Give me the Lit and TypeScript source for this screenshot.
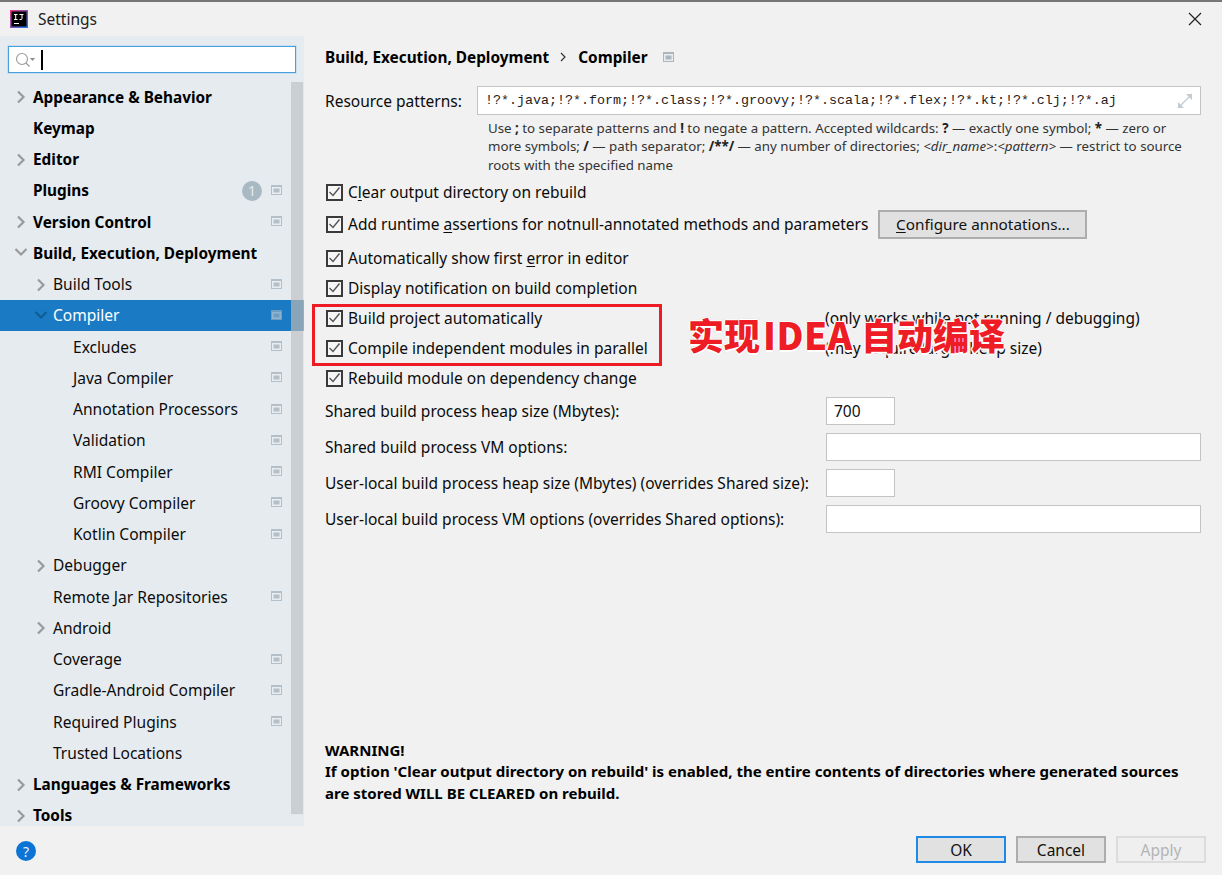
import { LitElement, html, css, svg } from "lit";
import { customElement } from "lit/decorators.js";

type Row = { t: string; lvl: number; bold?: boolean; arrow?: "r" | "d"; gear?: boolean; sel?: boolean; badge?: string };

const rows: Row[] = [
  { t: "Appearance & Behavior", lvl: 0, bold: true, arrow: "r" },
  { t: "Keymap", lvl: 0, bold: true },
  { t: "Editor", lvl: 0, bold: true, arrow: "r" },
  { t: "Plugins", lvl: 0, bold: true, gear: true, badge: "1" },
  { t: "Version Control", lvl: 0, bold: true, arrow: "r", gear: true },
  { t: "Build, Execution, Deployment", lvl: 0, bold: true, arrow: "d" },
  { t: "Build Tools", lvl: 1, arrow: "r", gear: true },
  { t: "Compiler", lvl: 1, arrow: "d", gear: true, sel: true },
  { t: "Excludes", lvl: 2, gear: true },
  { t: "Java Compiler", lvl: 2, gear: true },
  { t: "Annotation Processors", lvl: 2, gear: true },
  { t: "Validation", lvl: 2, gear: true },
  { t: "RMI Compiler", lvl: 2, gear: true },
  { t: "Groovy Compiler", lvl: 2, gear: true },
  { t: "Kotlin Compiler", lvl: 2, gear: true },
  { t: "Debugger", lvl: 1, arrow: "r" },
  { t: "Remote Jar Repositories", lvl: 1, gear: true },
  { t: "Android", lvl: 1, arrow: "r" },
  { t: "Coverage", lvl: 1, gear: true },
  { t: "Gradle-Android Compiler", lvl: 1, gear: true },
  { t: "Required Plugins", lvl: 1, gear: true },
  { t: "Trusted Locations", lvl: 1 },
  { t: "Languages & Frameworks", lvl: 0, bold: true, arrow: "r" },
  { t: "Tools", lvl: 0, bold: true, arrow: "r" },
];

const scope = svg`<svg class="scope" width="11" height="10" viewBox="0 0 11 10"><rect width="11" height="10" fill="currentColor"/><rect x="1" y="2" width="9" height="7" fill="#e9edf0"/><rect x="2.500" y="3.500" width="6" height="4" fill="currentColor"/></svg>`;

@customElement("app-root")
export class AppRoot extends LitElement {
  static styles = css`
    :host { display: block; width: 1222px; height: 875px; overflow: hidden; background: #f1f1f1; color: #0b0b0b;
      font-family: "Noto Sans", "Open Sans", sans-serif; font-size: 15.5px; position: relative; }
    * { box-sizing: border-box; }
    .app { height: 875px; display: flex; flex-direction: column; border-top: 2px solid #777; }
    .title { height: 34px; flex: none; display: flex; align-items: center; padding: 0 0 0 10px; gap: 10px; color: #222; font-size: 15.5px; }
    .close { margin-left: auto; margin-right: 20px; }
    .body { flex: 1; min-height: 0; display: flex; }
    .side { width: 304px; flex: none; background: #e6ebf0; display: flex; flex-direction: column; position: relative; overflow: hidden; }
    .search { margin: 10px 8px 8px 8px; height: 27px; background: #fff; border: 1px solid #4a9fdf; box-shadow: 0 0 0 .5px #a9d3f2; display: flex; align-items: center; padding-left: 6px; gap: 3px; flex: none; }
    .caret { width: 2px; height: 20px; background: #000; margin-left: 2px; }
    .tree { flex: 1; min-height: 0; overflow: hidden; }
    .row { height: 31.25px; display: flex; align-items: center; position: relative; white-space: nowrap; font-size: 15.55px; }
    .row.sel { background: #1a7bc4; color: #fff; }
    .bold { font-weight: 700; color: #000; font-size: 15.35px; }
    .lvl0 { padding-left: 33px; } .lvl1 { padding-left: 53px; } .lvl2 { padding-left: 73px; }
    .arrow { position: absolute; top: 9px; }
    .badge { position: absolute; left: 242px; top: 6px; width: 20px; height: 20px; border-radius: 50%; background: #a9b9c4; color: #e6ebf0; font-size: 14px; display: flex; align-items: center; justify-content: center; }
    .scope { color: #b3c0ca; flex: none; display: block; }
    .row .scope { position: absolute; left: 271px; top: 10px; }
    .row.sel .scope { color: #6f9dc0; }
    .row.sel .scope rect:nth-child(2) { fill: #8fb4d0; }
    .scroll { position: absolute; left: 291px; top: 46px; width: 13px; height: 733px; background: #cbcfd4; border-right: 1px solid #e3e6ea; border-bottom: 1px solid #e3e6ea; }
    .row.sel::after { content: ""; position: absolute; left: 291px; top: 0; bottom: 0; width: 13px; background: rgba(60,110,150,.45); z-index: 1; }
    .main { flex: 1; min-width: 0; padding: 0 21px 0 21px; display: flex; flex-direction: column; }
    .crumb { height: 42px; display: flex; align-items: center; font-weight: 700; color: #000; flex: none; font-size: 15.35px; }
    .crumb .sep { margin: 0 11px; display: block; }
    .crumb .scope { margin-left: 15px; color: #aab7c1; }
    .res { display: flex; align-items: center; height: 29px; margin-top: 8px; flex: none; }
    .res label { width: 152px; flex: none; }
    .input { background: #fff; border: 1px solid #c4c4c4; height: 100%; }
    .pat { flex: 1; display: flex; align-items: center; padding-left: 7px; font-family: "Liberation Mono", monospace; font-size: 13.33px; color: #222; height: 29px; border-width: 1.5px; }
    .pat svg { margin-left: auto; margin-right: 7px; }
    .help { margin: 3.5px 0 0 163px; font-size: 13.3px; line-height: 18.5px; color: #333; flex: none; white-space: nowrap; }
    .help b { color: #222; }
    .check { display: flex; align-items: center; gap: 5px; height: 30px; flex: none; white-space: nowrap; position: relative; }
    .c1 { margin-top: 3px; }
    .c2 { height: 34px; }
    .c3 { margin-top: 2px; }
    .box { width: 17px; height: 17px; border: 2px solid #3a3a3a; background: #f6f6f6; flex: none; display: flex; align-items: center; justify-content: center; margin-left: 1px; }
    .note { position: absolute; left: 500px; }
    .btn { display: inline-flex; align-items: center; justify-content: center; background: #e1e1e1; border: 2px solid #adadad; color: #111; }
    .cfg { margin-left: 5px; width: 209px; height: 29px; font-size: 15.3px; }
    .field { display: flex; align-items: center; height: 36px; flex: none; }
    .field label { width: 501px; flex: none; white-space: nowrap; }
    .field .input { height: 28px; border-width: 1.5px; }
    .sm { width: 69px; } .lg { flex: 1; }
    .val { padding: 2px 7px; color: #111; }
    .warn { margin-top: auto; margin-bottom: 22px; font-weight: 700; line-height: 21.5px; color: #000; font-size: 15.04px; white-space: nowrap; }
    .foot { height: 49px; flex: none; display: flex; align-items: flex-start; padding: 10px 16px 0 16px; gap: 10px; background: #f1f1f1; }
    .q { width: 20px; height: 20px; margin-top: 5px; border-radius: 50%; background: #0b74d4; color: #e8f2fb; font-size: 14px; display: flex; align-items: center; justify-content: center; margin-right: auto; }
    .foot .btn { width: 90px; height: 27px; }
    .ok { border-color: #1e8ae6; }
    .btn.dis { border-color: #dcdcdc; background: #efefef; color: #b4b4b4; }
    u { text-underline-offset: 2px; text-decoration-thickness: 1px; }
    .redbox { position: absolute; left: 312px; top: 304px; width: 350px; height: 62px; border: 3px solid #ed1c24; pointer-events: none; }
    .anno { position: absolute; left: 688px; top: 311px; font-family: "Noto Sans CJK SC", sans-serif; font-weight: 900; font-size: 36px; line-height: 46px; color: #ee1c25; white-space: nowrap; display: flex; align-items: baseline;
      text-shadow: 1.5px 0 0 #fff, -1.5px 0 0 #fff, 0 1.5px 0 #fff, 0 -1.5px 0 #fff, 1px 1px 1px #ddd, -1px -1px 1px #ddd, 1px -1px 1px #ddd, -1px 1px 1px #ddd; }
    .anno .lat { font-size: 37px; margin-left: 3px; width: 98px; letter-spacing: .5px; }
  `;

  private arrow(r: Row) {
    const x = r.lvl === 0 ? 15 : 35;
    const col = r.sel ? "#0f5c96" : "#9a9a9a";
    if (r.arrow === "r")
      return html`<svg class="arrow" style="left:${x}px" width="12" height="14" viewBox="0 0 12 14"><path d="M3 1.500 L8.500 7 L3 12.500" fill="none" stroke="${col}" stroke-width="2.200"/></svg>`;
    if (r.arrow === "d")
      return html`<svg class="arrow" style="left:${x - 1}px" width="14" height="12" viewBox="0 0 14 12"><path d="M1.500 3 L7 8.500 L12.500 3" fill="none" stroke="${col}" stroke-width="2.200"/></svg>`;
    return null;
  }

  private box() {
    return html`<span class="box"><svg width="13" height="12" viewBox="0 0 13 12"><path d="M1.500 6 L5 9.500 L11.500 1.500" fill="none" stroke="#555" stroke-width="1.400"/></svg></span>`;
  }

  render() {
    return html`<div class="app">
      <div class="title">
        <svg width="18" height="18" viewBox="0 0 18 18">
          <defs><linearGradient id="g" x1="0" y1="0" x2="1" y2="1"><stop offset="0" stop-color="#f0347c"/><stop offset="1" stop-color="#1678f0"/></linearGradient></defs>
          <rect width="18" height="18" fill="url(#g)"/><rect x="1.500" y="1.500" width="15" height="15" fill="#000"/>
          <rect x="4" y="13" width="5" height="1" fill="#fff"/>
          <path d="M4 4.500h3.500M5.700 4.500v5M4 9.500h3.500M9.500 4.500h4M12 4.500v4q0 1-1 1h-1.500" fill="none" stroke="#fff" stroke-width="1"/>
        </svg>
        <span>Settings</span>
        <svg class="close" width="14" height="14" viewBox="0 0 14 14"><path d="M1 1 L13 13 M13 1 L1 13" stroke="#222" stroke-width="1.200"/></svg>
      </div>
      <div class="body">
        <aside class="side">
          <div class="search">
            <svg width="21" height="16" viewBox="0 0 21 16"><circle cx="7" cy="7" r="5.500" fill="none" stroke="#9a9a9a" stroke-width="1.100"/><path d="M11 11 L14.500 14.500" stroke="#9a9a9a" stroke-width="1.300"/><path d="M15 6 h5 l-2.500 3 z" fill="#8a8a8a"/></svg>
            <span class="caret"></span>
          </div>
          <div class="tree">
            ${rows.map((r) => html`<div class="row lvl${r.lvl} ${r.sel ? "sel" : ""}">
              ${this.arrow(r)}
              <span class="${r.bold ? "bold" : ""}">${r.t}</span>
              ${r.badge ? html`<span class="badge">${r.badge}</span>` : null}
              ${r.gear ? scope : null}
            </div>`)}
          </div>
          <div class="scroll"></div>
        </aside>
        <main class="main">
          <div class="crumb">
            <span>Build, Execution, Deployment</span>
            <svg class="sep" width="7" height="10" viewBox="0 0 7 10"><path d="M1 1 L5 5 L1 9" fill="none" stroke="#333" stroke-width="1.200"/></svg>
            <span>Compiler</span>
            ${scope}
          </div>
          <div class="res">
            <label>Resource patterns:</label>
            <div class="input pat">!?*.java;!?*.form;!?*.class;!?*.groovy;!?*.scala;!?*.flex;!?*.kt;!?*.clj;!?*.aj
              <svg width="16" height="16" viewBox="0 0 16 16"><path d="M1 15 L15 1" stroke="#c4ccd2" stroke-width="1.200"/><path d="M9 1h6v6z M1 9v6h6z" fill="#c4ccd2"/></svg>
            </div>
          </div>
          <div class="help">
            Use <b>;</b> to separate patterns and <b>!</b> to negate a pattern. Accepted wildcards: <b>?</b> — exactly one symbol; <b>*</b> — zero or<br>
            more symbols; <b>/</b> — path separator; <b>/**/</b> — any number of directories; <i>&lt;dir_name&gt;</i>:<i>&lt;pattern&gt;</i> — restrict to source<br>
            roots with the specified name
          </div>
          <div class="check c1">${this.box()}<span>C<u>l</u>ear output directory on rebuild</span></div>
          <div class="check c2">${this.box()}<span>Add runtime <u>a</u>ssertions for notnull-annotated methods and parameters</span><span class="btn cfg"><span><u>C</u>onfigure annotations...</span></span></div>
          <div class="check c3">${this.box()}<span>Automatically show first <u>e</u>rror in editor</span></div>
          <div class="check">${this.box()}<span>Display notification on build completion</span></div>
          <div class="check">${this.box()}<span>Build project automatically</span><span class="note">(only works while not running / debugging)</span></div>
          <div class="check">${this.box()}<span>Compile independent modules in parallel</span><span class="note">(may require larger heap size)</span></div>
          <div class="check">${this.box()}<span>Rebuild module on dependency change</span></div>
          <div class="field"><label>Shared build process heap size (Mbytes):</label><div class="input sm val">700</div></div>
          <div class="field"><label>Shared build process VM options:</label><div class="input lg"></div></div>
          <div class="field"><label>User-local build process heap size (Mbytes) (overrides Shared size):</label><div class="input sm"></div></div>
          <div class="field"><label>User-local build process VM options (overrides Shared options):</label><div class="input lg"></div></div>
          <div class="warn">WARNING!<br>If option 'Clear output directory on rebuild' is enabled, the entire contents of directories where generated sources<br>are stored WILL BE CLEARED on rebuild.</div>
        </main>
      </div>
      <div class="foot">
        <span class="q">?</span>
        <span class="btn ok">OK</span>
        <span class="btn">Cancel</span>
        <span class="btn dis">Apply</span>
      </div>
    </div>
    <div class="redbox"></div>
    <div class="anno"><span>实现</span><span class="lat">IDEA</span><span>自动编译</span></div>`;
  }
}
